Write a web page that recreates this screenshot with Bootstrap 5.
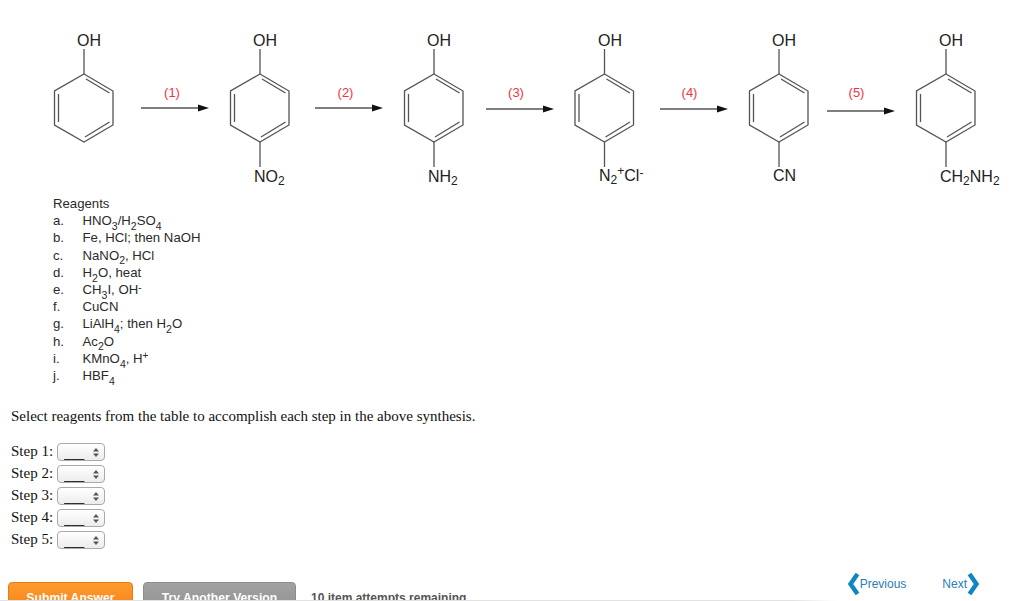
<!DOCTYPE html>
<html lang="en">
  <head>
    <meta charset="UTF-8" />
    <meta name="viewport" content="width=device-width, initial-scale=1.0" />
    <title>Synthesis Question</title>
    <link
      href="https://cdn.jsdelivr.net/npm/bootstrap@5.3.2/dist/css/bootstrap.min.css"
      rel="stylesheet"
    />
    <style>
      html,
      body {
        height: 601px;
        overflow: hidden;
        background-color: #fff;
      }
      .page-frame {
        height: 601px;
        overflow: hidden;
        position: relative;
      }
      .page-frame::after {
        content: "";
        position: absolute;
        left: 0;
        bottom: 0;
        width: 835px;
        height: 1px;
        background: linear-gradient(to right, #e2e2e2 95%, #fff);
      }
      .scheme {
        display: block;
        width: 1015px;
        height: 192px;
      }
      .scheme text {
        font-family: "Liberation Sans", Arial, sans-serif;
        font-size: 16px;
        fill: #222;
      }
      .scheme .step-no {
        font-size: 13px;
        fill: #f2333f;
      }
      .scheme .sub {
        font-size: 12px;
      }
      .bond {
        stroke: #555;
        stroke-width: 1.3;
        fill: none;
      }
      .arrow-line {
        stroke: #555;
        stroke-width: 1.4;
      }
      .reagents {
        margin: 3px 0 0 53px;
        font-family: "Liberation Sans", Arial, sans-serif;
        font-size: 13.2px;
        line-height: 17.2px;
        color: #2a2a2a;
      }
      .reagent-row {
        display: flex;
      }
      .reagent-key {
        width: 29.5px;
      }
      .reagents sub {
        font-size: 10.5px;
        bottom: -0.45em;
        line-height: 0;
      }
      .reagents sup {
        font-size: 10px;
        top: -0.35em;
        line-height: 0;
      }
      .prompt {
        margin: 23px 0 0 11px;
        font-family: "Liberation Serif", "Times New Roman", serif;
        font-size: 15px;
        line-height: 18px;
        color: #111;
      }
      .steps {
        margin: 16px 0 0 11px;
        font-family: "Liberation Serif", "Times New Roman", serif;
        font-size: 15px;
        color: #111;
      }
      .step-row {
        height: 22px;
        display: flex;
        align-items: center;
        gap: 4px;
      }
      .step-row label {
        margin-bottom: 2px;
      }
      .mac-select {
        position: relative;
        display: block;
        width: 48px;
        height: 18px;
      }
      .mac-select select {
        display: block;
        width: 100%;
        height: 100%;
        padding: 0 0 0 6px;
        border: 1px solid #a9a9a9;
        border-radius: 4px;
        appearance: none;
        background: linear-gradient(#ffffff, #ececec);
        font-family: "Liberation Sans", Arial, sans-serif;
        font-size: 12px;
        color: #111;
      }
      .mac-select svg {
        position: absolute;
        top: 5px;
        right: 6px;
        pointer-events: none;
      }
      .action-bar {
        position: absolute;
        left: 8px;
        right: 36px;
        top: 571px;
      }
      .action-btn {
        margin-top: 11px;
        height: 40px;
        padding: 6px 0 0;
        border-radius: 4px;
        font-family: "Liberation Sans", Arial, sans-serif;
        font-size: 12.2px;
        font-weight: bold;
        color: #fff;
        text-align: center;
      }
      .btn-submit {
        width: 125px;
        background: linear-gradient(#ff9a2e, #f27a10);
        border: 1px solid #ec7a12;
      }
      .btn-retry {
        width: 153px;
        margin-left: 10px;
        background: linear-gradient(#a2a2a2, #8a8a8a);
        border: 1px solid #8c8c8c;
      }
      .attempts {
        margin: 18px 0 0 15px;
        font-family: "Liberation Sans", Arial, sans-serif;
        font-size: 12px;
        font-weight: bold;
        color: #555;
      }
      .pager {
        margin-top: 1px;
      }
      .pager-link {
        font-family: "Liberation Sans", Arial, sans-serif;
        font-size: 12px;
        line-height: 24px;
        color: #2b7cb8;
        text-decoration: none;
      }
      .pager-next {
        margin-left: 36px;
      }
    </style>
  </head>
  <body>
    <div class="page-frame">
      <!-- Reaction scheme -->
      <svg class="scheme" viewBox="0 0 1015 192" xmlns="http://www.w3.org/2000/svg">
        <defs>
          <g id="ring">
            <path class="bond" d="M0 74 L29 91 L29 125 L0 142 L-29.500 125 L-29.500 91 Z" />
            <path class="bond" d="M2 79 L25.500 93 M25.500 122 L1 137 M-25.500 94 L-25.500 122" />
          </g>
          <g id="arrow">
            <line class="arrow-line" x1="0" y1="0" x2="60" y2="0" />
            <path d="M57 -3.500 L68 0 L57 3.500 Z" fill="#111" />
          </g>
        </defs>

        <use href="#ring" x="84" />
        <use href="#ring" x="260" />
        <use href="#ring" x="434" />
        <use href="#ring" x="604.500" />
        <use href="#ring" x="779" />
        <use href="#ring" x="946" />

        <path
          class="bond"
          d="M84 49 V74 M260 49 V74 M434 49 V74 M604.500 49 V74 M779 49 V74 M946 49 V74 M260 142 V167 M434 142 V167 M604.500 142 V167 M779 142 V167 M946 142 V167"
        />

        <text x="89" y="46" text-anchor="middle">OH</text>
        <text x="265" y="46" text-anchor="middle">OH</text>
        <text x="439" y="46" text-anchor="middle">OH</text>
        <text x="610" y="46" text-anchor="middle">OH</text>
        <text x="784" y="46" text-anchor="middle">OH</text>
        <text x="951" y="46" text-anchor="middle">OH</text>

        <text x="254" y="182">NO<tspan class="sub" dy="3">2</tspan></text>
        <text x="428" y="182">NH<tspan class="sub" dy="3">2</tspan></text>
        <text x="599" y="181">N<tspan class="sub" dy="3">2</tspan><tspan class="sub" dy="-9">+</tspan><tspan dy="6">Cl</tspan><tspan class="sub" dy="-4">-</tspan></text>
        <text x="773" y="181">CN</text>
        <text x="940" y="182">CH<tspan class="sub" dy="3">2</tspan><tspan dy="-3">NH</tspan><tspan class="sub" dy="3">2</tspan></text>

        <use href="#arrow" x="141" y="108" />
        <use href="#arrow" x="315" y="108" />
        <use href="#arrow" x="486" y="109" />
        <use href="#arrow" x="660" y="109" />
        <use href="#arrow" x="827" y="111" />

        <text class="step-no" x="172" y="97" text-anchor="middle">(1)</text>
        <text class="step-no" x="345.500" y="97" text-anchor="middle">(2)</text>
        <text class="step-no" x="516" y="97" text-anchor="middle">(3)</text>
        <text class="step-no" x="689.500" y="97" text-anchor="middle">(4)</text>
        <text class="step-no" x="856.500" y="97" text-anchor="middle">(5)</text>
      </svg>

      <!-- Reagent table -->
      <div class="reagents">
        <div>Reagents</div>
        <div class="reagent-row"><span class="reagent-key">a.</span><span>HNO<sub>3</sub>/H<sub>2</sub>SO<sub>4</sub></span></div>
        <div class="reagent-row"><span class="reagent-key">b.</span><span>Fe, HCl; then NaOH</span></div>
        <div class="reagent-row"><span class="reagent-key">c.</span><span>NaNO<sub>2</sub>, HCl</span></div>
        <div class="reagent-row"><span class="reagent-key">d.</span><span>H<sub>2</sub>O, heat</span></div>
        <div class="reagent-row"><span class="reagent-key">e.</span><span>CH<sub>3</sub>I, OH<sup>-</sup></span></div>
        <div class="reagent-row"><span class="reagent-key">f.</span><span>CuCN</span></div>
        <div class="reagent-row"><span class="reagent-key">g.</span><span>LiAlH<sub>4</sub>; then H<sub>2</sub>O</span></div>
        <div class="reagent-row"><span class="reagent-key">h.</span><span>Ac<sub>2</sub>O</span></div>
        <div class="reagent-row"><span class="reagent-key">i.</span><span>KMnO<sub>4</sub>, H<sup>+</sup></span></div>
        <div class="reagent-row"><span class="reagent-key">j.</span><span>HBF<sub>4</sub></span></div>
      </div>

      <p class="prompt">Select reagents from the table to accomplish each step in the above synthesis.</p>

      <form class="steps" id="step-list"></form>

      <!-- Action bar, cut off by the window edge -->
      <div class="action-bar d-flex justify-content-between align-items-start">
        <div class="d-flex align-items-start">
          <div class="action-btn btn-submit">Submit Answer</div>
          <div class="action-btn btn-retry">Try Another Version</div>
          <div class="attempts">10 item attempts remaining</div>
        </div>
        <div class="d-flex align-items-center pager">
          <a class="pager-link d-flex align-items-center" href="#">
            <svg width="12" height="22" viewBox="0 0 12 22"><path d="M9.500 1 L2.500 11 L9.500 21" fill="none" stroke="#0f86c4" stroke-width="4.500" /></svg>
            Previous
          </a>
          <a class="pager-link pager-next d-flex align-items-center" href="#">
            Next
            <svg width="12" height="22" viewBox="0 0 12 22"><path d="M2.500 1 L9.500 11 L2.500 21" fill="none" stroke="#0f86c4" stroke-width="4.500" /></svg>
          </a>
        </div>
      </div>
    </div>

    <script>
      document.addEventListener("DOMContentLoaded", function () {
        const list = document.getElementById("step-list");
        [1, 2, 3, 4, 5].forEach((n) => {
          const row = document.createElement("div");
          row.className = "step-row";
          row.innerHTML = `
            <label for="step-${n}">Step ${n}:</label>
            <span class="mac-select">
              <select id="step-${n}"><option>___</option></select>
              <svg width="6" height="9" viewBox="0 0 6 9"><path d="M3 0 L6 3.500 H0 Z M3 9 L6 5.500 H0 Z" fill="#555" /></svg>
            </span>`;
          list.appendChild(row);
        });
      });
    </script>
    <script src="https://cdn.jsdelivr.net/npm/bootstrap@5.3.2/dist/js/bootstrap.bundle.min.js"></script>
  </body>
</html>
